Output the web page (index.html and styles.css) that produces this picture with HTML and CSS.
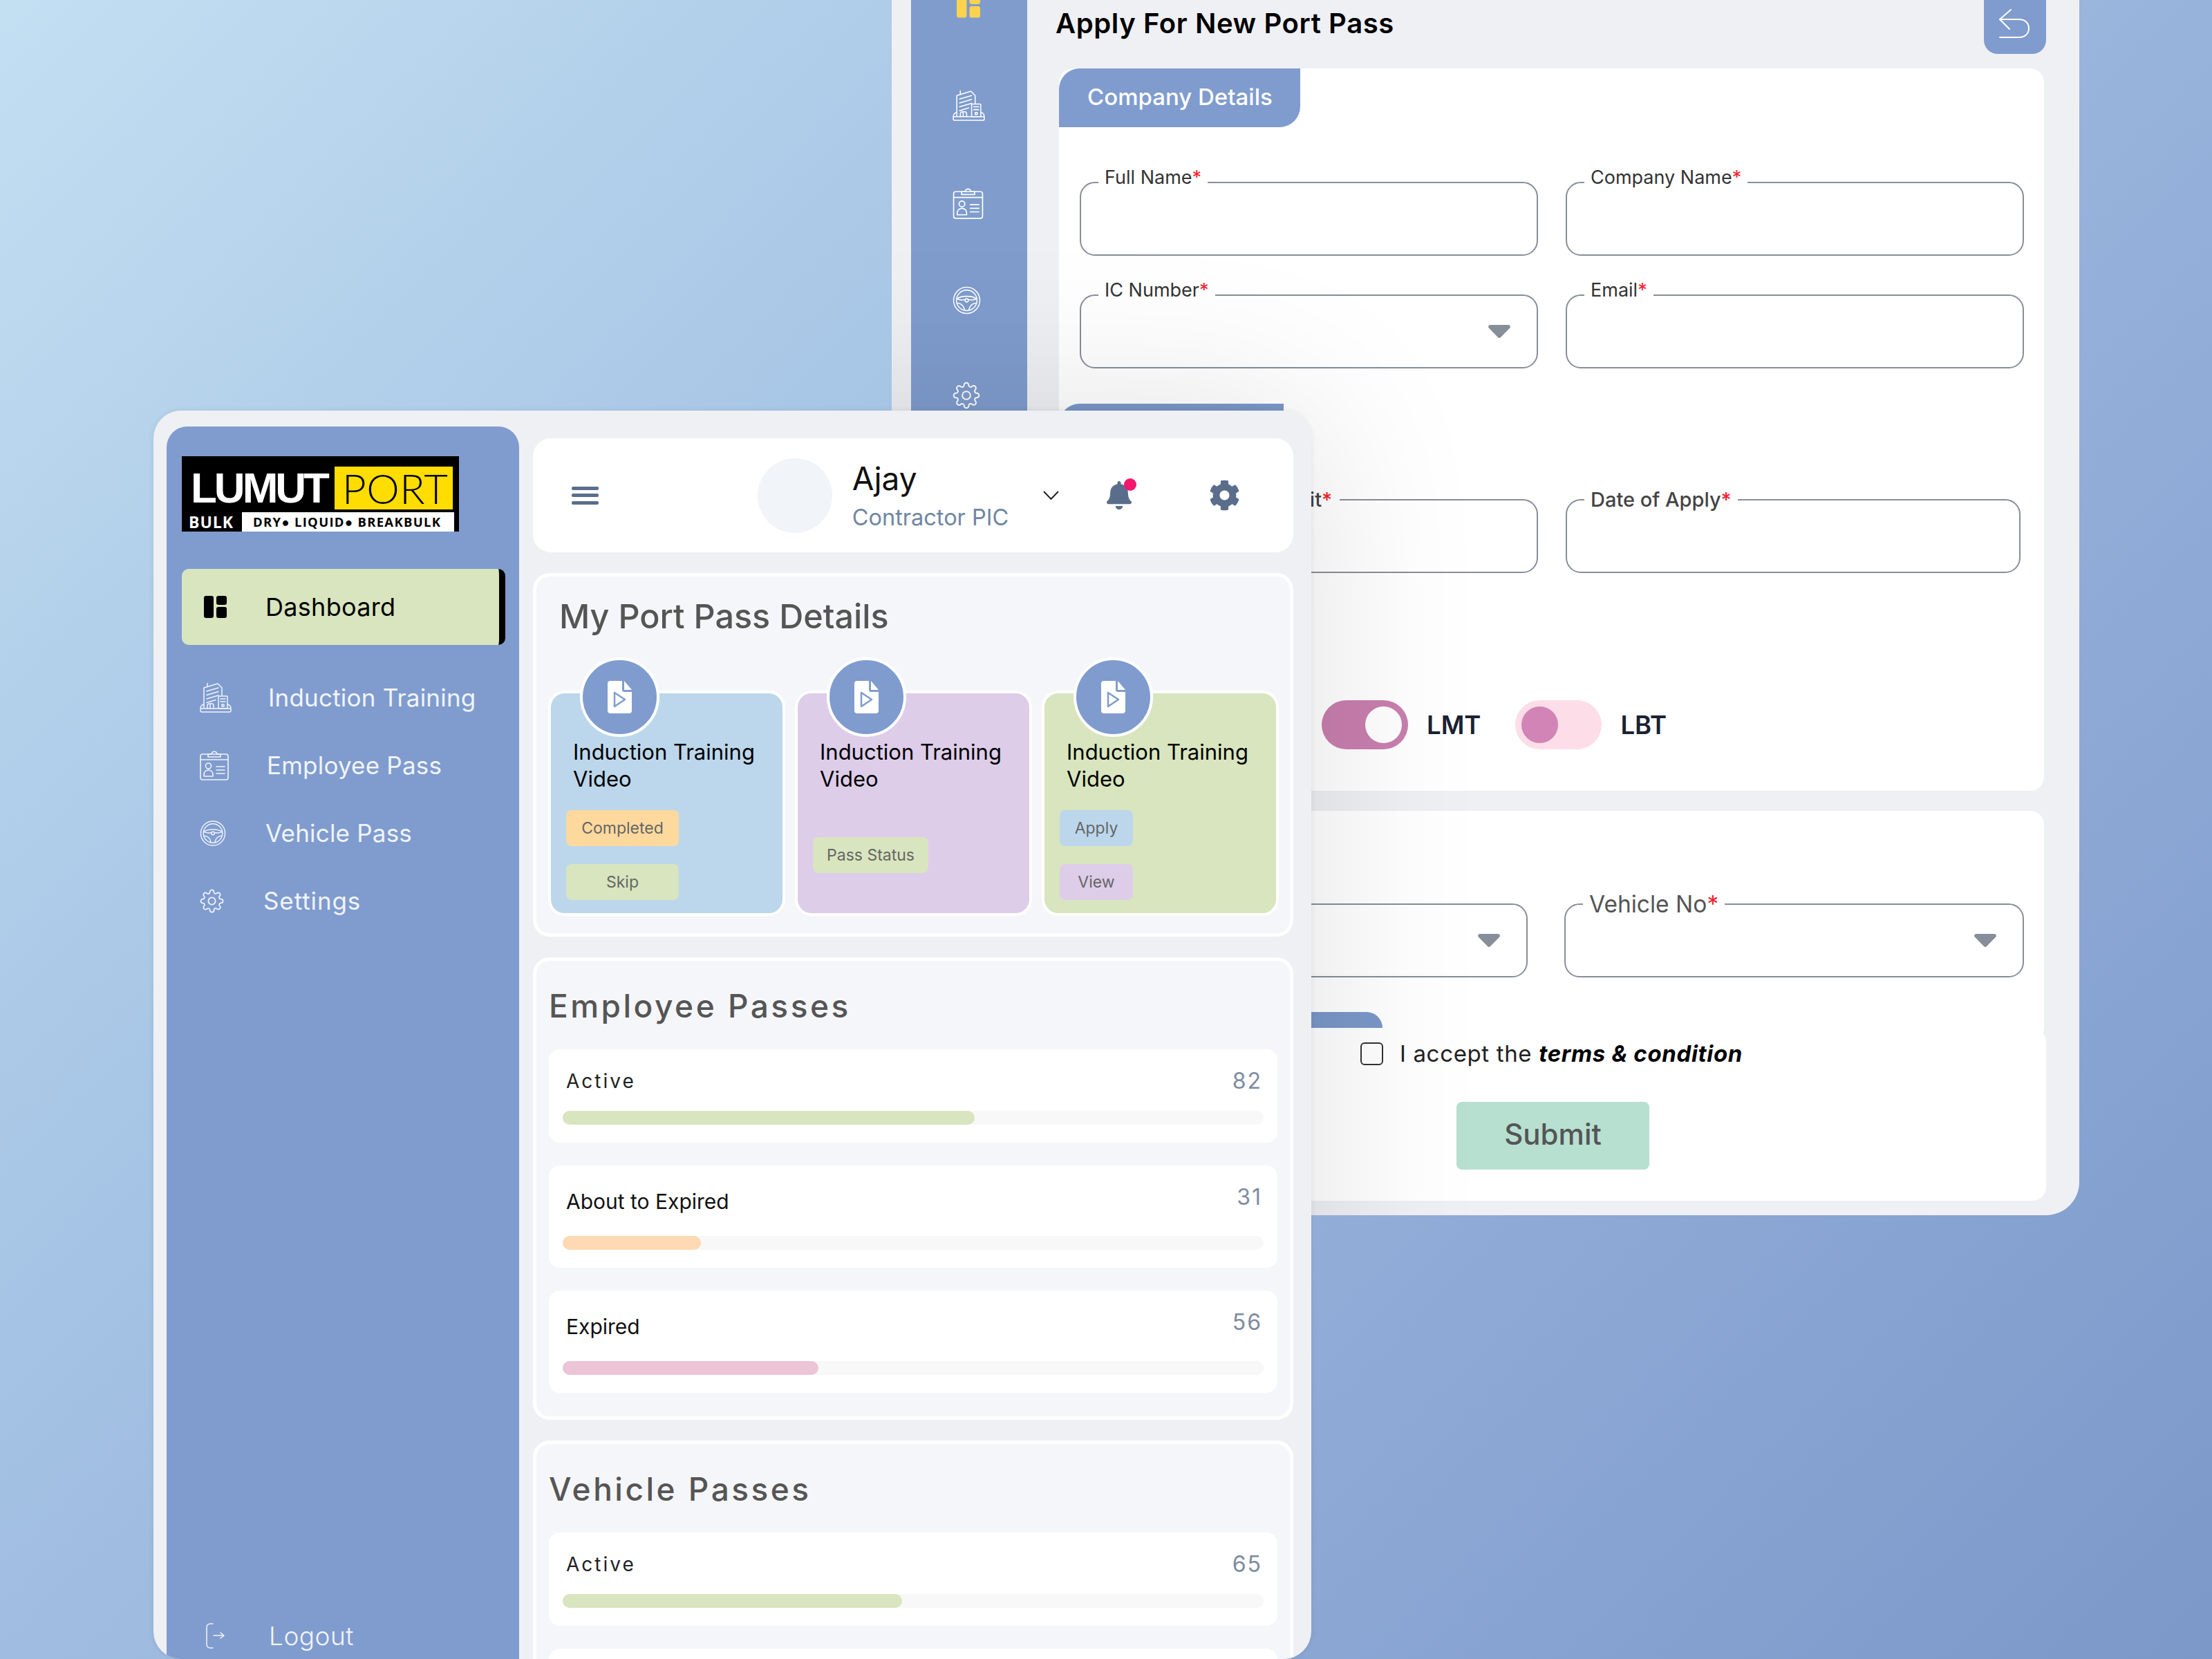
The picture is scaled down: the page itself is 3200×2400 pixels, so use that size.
FILE: index.html
```html
<!DOCTYPE html>
<html lang="en">
<head>
  <meta charset="UTF-8">
  <title>Lumut Port Pass</title>
  <link rel="stylesheet" href="styles.css">
</head>
<body>
  <svg class="sprite" xmlns="http://www.w3.org/2000/svg">
    <symbol id="ic-board" viewBox="0 0 33 32">
      <rect x="0" y="0" width="14" height="32" rx="3"/>
      <rect x="18" y="0" width="15" height="13" rx="3"/>
      <rect x="18" y="16" width="15" height="16" rx="3"/>
    </symbol>
    <symbol id="ic-building" viewBox="0 0 46 44">
      <g fill="none" stroke="currentColor" stroke-width="1.500" stroke-linejoin="round" stroke-linecap="round">
        <path d="M6 37V8L26 2l6 6v11"/>
        <path d="M11 6V1.500"/>
        <path d="M10 13l17-5M10 18.500l17-5M10 24l17-5M10 29.500l13-4"/>
        <rect x="27" y="20" width="13" height="18" rx="1"/>
        <path d="M30 24h7M30 28h7"/>
        <rect x="32" y="32" width="3" height="3"/>
        <rect x="1" y="38" width="44" height="5" rx="2"/>
        <path d="M1 38c0-3 2-6 5-6M40 32c3 0 5 3 5 6"/>
        <path d="M11 38v-4a3 3 0 0 1 3-3h4a3 3 0 0 1 2 3v4M15 31v7"/>
      </g>
    </symbol>
    <symbol id="ic-card" viewBox="0 0 42 43">
      <g fill="none" stroke="currentColor" stroke-width="1.600" stroke-linejoin="round" stroke-linecap="round">
        <rect x="1" y="5" width="40" height="37" rx="3"/>
        <path d="M1 13h40"/>
        <path d="M12 9V5h5c1-5 7-5 8 0h5v4z"/>
        <circle cx="12.500" cy="22" r="4"/>
        <path d="M6 37v-2.500c0-4 3-6.500 6.500-6.500s6.500 2.500 6.500 6.500V37z"/>
        <path d="M24 23h12M24 28h12M24 33h12"/>
      </g>
    </symbol>
    <symbol id="ic-wheel" viewBox="0 0 40 40">
      <g fill="none" stroke="currentColor" stroke-width="1.500" stroke-linejoin="round" stroke-linecap="round">
        <circle cx="20" cy="20" r="18.500"/>
        <circle cx="20" cy="20" r="14.500"/>
        <circle cx="20" cy="20" r="2.300"/>
        <path d="M6.500 18C11 13 29 13 33.500 18"/>
        <path d="M6.500 18c4 1.500 7 2 11 1M33.500 18c-4 1.500-7 2-11 1"/>
        <path d="M7 24c5 0 9 4 10 9.500M33 24c-5 0-9 4-10 9.500"/>
      </g>
    </symbol>
    <symbol id="ic-gear" viewBox="0 0 24 24">
      <g fill="none" stroke="currentColor" stroke-width="1.200" stroke-linejoin="round">
        <circle cx="12" cy="12" r="3.500"/>
        <path d="M19.400 15a1.650 1.650 0 0 0 .33 1.820l.06.06a2 2 0 0 1 0 2.830 2 2 0 0 1-2.830 0l-.06-.06a1.650 1.650 0 0 0-1.820-.33 1.650 1.650 0 0 0-1 1.510V21a2 2 0 0 1-2 2 2 2 0 0 1-2-2v-.09A1.650 1.650 0 0 0 9 19.400a1.650 1.650 0 0 0-1.820.33l-.06.06a2 2 0 0 1-2.830 0 2 2 0 0 1 0-2.830l.06-.06a1.650 1.650 0 0 0 .33-1.820 1.650 1.650 0 0 0-1.510-1H3a2 2 0 0 1-2-2 2 2 0 0 1 2-2h.09A1.650 1.650 0 0 0 4.600 9a1.650 1.650 0 0 0-.33-1.820l-.06-.06a2 2 0 0 1 0-2.830 2 2 0 0 1 2.830 0l.06.06a1.650 1.650 0 0 0 1.820.33H9a1.650 1.650 0 0 0 1-1.510V3a2 2 0 0 1 2-2 2 2 0 0 1 2 2v.09a1.650 1.650 0 0 0 1 1.510 1.650 1.650 0 0 0 1.820-.33l.06-.06a2 2 0 0 1 2.830 0 2 2 0 0 1 0 2.830l-.06.06a1.650 1.650 0 0 0-.33 1.820V9a1.650 1.650 0 0 0 1.510 1H21a2 2 0 0 1 2 2 2 2 0 0 1-2 2h-.09a1.650 1.650 0 0 0-1.510 1z"/>
      </g>
    </symbol>
    <symbol id="ic-caret" viewBox="0 0 32 19">
      <path fill="#868e99" d="M3 0h26c2.500 0 3.800 2.600 2.200 4.500L18 18c-1.200 1.300-2.800 1.300-4 0L.8 4.500C-.8 2.600.5 0 3 0z"/>
    </symbol>
    <symbol id="ic-doc" viewBox="0 0 35 47">
      <path fill="#fff" d="M4 0h17v13a3 3 0 0 0 3 3h11v27a4 4 0 0 1-4 4H4a4 4 0 0 1-4-4V4a4 4 0 0 1 4-4z"/>
      <path fill="#fff" d="M24 0l11 13H24z"/>
      <path fill="none" stroke="#809cce" stroke-width="2.500" stroke-linejoin="round" d="M10 17v20l15-10z"/>
    </symbol>
  </svg>

  <div class="desk">

    <!-- back window: apply form -->
    <section class="win-back">
      <aside class="mini-side">
        <svg class="mini-board"><use href="#ic-board"/></svg>
        <svg class="mini-building"><use href="#ic-building"/></svg>
        <svg class="mini-card"><use href="#ic-card"/></svg>
        <svg class="mini-wheel"><use href="#ic-wheel"/></svg>
        <svg class="mini-gear"><use href="#ic-gear"/></svg>
      </aside>

      <div class="form-main">
        <div class="form-head">
          <h1>Apply For New Port Pass</h1>
          <button class="back-btn" type="button">
            <svg width="50" height="46" viewBox="0 0 50 46" fill="none" stroke="#fff" stroke-width="2" stroke-linecap="round" stroke-linejoin="round">
              <path d="M19 3L3 17l14 14"/>
              <path d="M3 17h28c8 0 14 5 14 13s-6 13-14 13H3"/>
            </svg>
          </button>
        </div>

        <div class="form-card card-company">
          <div class="tab">Company Details</div>
          <div class="field-grid">
            <fieldset class="field"><legend>Full Name<em>*</em></legend></fieldset>
            <fieldset class="field"><legend>Company Name<em>*</em></legend></fieldset>
            <fieldset class="field"><legend>IC Number<em>*</em></legend><svg class="caret"><use href="#ic-caret"/></svg></fieldset>
            <fieldset class="field"><legend>Email<em>*</em></legend></fieldset>
          </div>

          <div class="tab tab-two"></div>
          <div class="field-grid grid-two">
            <fieldset class="field field-strong field-permit"><legend>Name of Entry Permit<em>*</em></legend></fieldset>
            <fieldset class="field field-strong"><legend>Date of Apply<em>*</em></legend></fieldset>
          </div>

          <div class="toggles">
            <div class="toggle-item">
              <span class="toggle toggle-on"><i></i></span>
              <span class="toggle-label">LMT</span>
            </div>
            <div class="toggle-item">
              <span class="toggle toggle-off"><i></i></span>
              <span class="toggle-label">LBT</span>
            </div>
          </div>
        </div>

        <div class="form-card card-vehicle">
          <div class="field-grid grid-three">
            <fieldset class="field field-big"><legend>Vehicle Type<em>*</em></legend><svg class="caret"><use href="#ic-caret"/></svg></fieldset>
            <fieldset class="field field-big"><legend>Vehicle No<em>*</em></legend><svg class="caret"><use href="#ic-caret"/></svg></fieldset>
          </div>
          <div class="tab tab-three"></div>
        </div>

        <div class="form-card card-submit">
          <label class="accept">
            <input type="checkbox">
            <span>I accept the <b><i>terms &amp; condition</i></b></span>
          </label>
          <button class="submit-btn" type="button">Submit</button>
        </div>
      </div>
    </section>

    <!-- front window: dashboard -->
    <section class="win-front">
      <aside class="sidebar">
        <div class="logo">
          <div class="logo-top">
            <span class="logo-lumut">LUMUT</span>
            <span class="logo-port">PORT</span>
          </div>
          <div class="logo-bottom">
            <span class="logo-bulk">BULK</span>
            <span class="logo-tag">DRY● LIQUID● BREAKBULK</span>
          </div>
        </div>

        <a class="nav-active">
          <svg class="ic-dash"><use href="#ic-board"/></svg>
          <span>Dashboard</span>
        </a>
        <nav class="nav">
          <a class="nav-item gap-building"><svg class="ic-building"><use href="#ic-building"/></svg><span>Induction Training</span></a>
          <a class="nav-item gap-card"><svg class="ic-card"><use href="#ic-card"/></svg><span>Employee Pass</span></a>
          <a class="nav-item gap-wheel"><svg class="ic-wheel"><use href="#ic-wheel"/></svg><span>Vehicle Pass</span></a>
          <a class="nav-item gap-gear"><svg class="ic-gear"><use href="#ic-gear"/></svg><span>Settings</span></a>
        </nav>
        <a class="logout">
          <svg width="29" height="37" viewBox="0 0 29 37" fill="none" stroke="currentColor" stroke-width="1.500" stroke-linecap="round" stroke-linejoin="round">
            <path d="M11 1H7a5 5 0 0 0-5 5v25a5 5 0 0 0 5 5h4"/>
            <path d="M12 18h14M22 14l5 4-5 4"/>
          </svg>
          <span>Logout</span>
        </a>
      </aside>

      <main class="content">
        <header class="topbar">
          <div class="burger"><span></span><span></span><span></span></div>
          <div class="avatar"></div>
          <div class="user">
            <div class="user-name">Ajay</div>
            <div class="user-role">Contractor PIC</div>
          </div>
          <svg class="chevron" width="23" height="13" viewBox="0 0 23 13" fill="none" stroke="#222" stroke-width="2"><path d="M1 1l10.500 11L22 1"/></svg>
          <div class="bell">
            <svg width="36" height="43" viewBox="0 0 448 512" fill="#5a6e8c"><path d="M224 512c35.320 0 63.970-28.650 63.970-64H160.030c0 35.350 28.650 64 63.970 64zm215.390-149.710c-19.320-20.760-55.470-51.990-55.470-154.290 0-77.700-54.480-139.900-127.940-155.160V32c0-17.670-14.320-32-31.980-32s-31.980 14.330-31.980 32v20.840C118.560 68.100 64.080 130.300 64.080 208c0 102.300-36.150 133.530-55.470 154.290-6 6.450-8.660 14.160-8.610 21.710.11 16.400 12.980 32 32.100 32h383.800c19.120 0 32-15.600 32.100-32 .05-7.550-2.610-15.260-8.610-21.710z"/></svg>
            <span class="bell-dot"></span>
          </div>
          <svg class="cog" width="45" height="45" viewBox="0 0 512 512" fill="#5a6e8c"><path d="M487.400 315.700l-42.600-24.600c4.300-23.200 4.300-47 0-70.200l42.600-24.600c4.900-2.800 7.100-8.600 5.500-14-11.100-35.600-30-67.800-54.700-94.600-3.800-4.100-10-5.100-14.800-2.300L380.800 110c-17.900-15.400-38.500-27.300-60.800-35.100V25.800c0-5.600-3.900-10.500-9.400-11.700-36.700-8.200-74.300-7.800-109.200 0-5.500 1.200-9.400 6.100-9.400 11.700V75c-22.200 7.900-42.800 19.800-60.800 35.100L88.700 85.500c-4.900-2.800-11-1.900-14.800 2.300-24.700 26.700-43.600 58.900-54.700 94.600-1.700 5.400.6 11.200 5.500 14L67.300 221c-4.300 23.200-4.300 47 0 70.200l-42.600 24.600c-4.900 2.800-7.100 8.600-5.500 14 11.100 35.600 30 67.800 54.700 94.600 3.800 4.100 10 5.100 14.800 2.300l42.600-24.600c17.900 15.400 38.500 27.300 60.800 35.100v49.200c0 5.600 3.900 10.500 9.400 11.700 36.700 8.200 74.300 7.800 109.200 0 5.500-1.200 9.400-6.100 9.400-11.700v-49.200c22.200-7.900 42.800-19.800 60.800-35.100l42.600 24.600c4.900 2.800 11 1.900 14.800-2.300 24.700-26.700 43.600-58.900 54.700-94.600 1.500-5.500-.7-11.300-5.600-14.100zM256 336c-44.100 0-80-35.900-80-80s35.900-80 80-80 80 35.900 80 80-35.900 80-80 80z"/></svg>
        </header>

        <section class="panel panel-pass">
          <h2 class="pass-title">My Port Pass Details</h2>
          <div class="pass-grid">
            <div class="pass-card bg-blue">
              <div class="pass-circle"><svg><use href="#ic-doc"/></svg></div>
              <p class="pass-name">Induction Training Video</p>
              <div class="pass-actions">
                <span class="chip chip-wide bg-orange">Completed</span>
                <span class="chip chip-wide bg-green">Skip</span>
              </div>
            </div>
            <div class="pass-card bg-purple">
              <div class="pass-circle"><svg><use href="#ic-doc"/></svg></div>
              <p class="pass-name">Induction Training Video</p>
              <div class="pass-actions pass-actions-low">
                <span class="chip chip-status bg-green">Pass Status</span>
              </div>
            </div>
            <div class="pass-card bg-green">
              <div class="pass-circle"><svg><use href="#ic-doc"/></svg></div>
              <p class="pass-name">Induction Training Video</p>
              <div class="pass-actions">
                <span class="chip chip-small bg-blue">Apply</span>
                <span class="chip chip-small bg-purple">View</span>
              </div>
            </div>
          </div>
        </section>

        <section class="panel panel-stats">
          <h2 class="stats-title">Employee Passes</h2>
          <div class="stat">
            <div class="stat-head">
              <span class="stat-label spaced">Active</span>
              <span class="stat-value">82</span>
            </div>
            <div class="bar"><div class="bar-fill fill-green" style="width: 596px"></div></div>
          </div>
          <div class="stat stat-tall">
            <div class="stat-head">
              <span class="stat-label">About to Expired</span>
              <span class="stat-value">31</span>
            </div>
            <div class="bar"><div class="bar-fill fill-orange" style="width: 200px"></div></div>
          </div>
          <div class="stat stat-tall">
            <div class="stat-head">
              <span class="stat-label">Expired</span>
              <span class="stat-value">56</span>
            </div>
            <div class="bar"><div class="bar-fill fill-pink" style="width: 370px"></div></div>
          </div>
        </section>

        <section class="panel panel-stats">
          <h2 class="stats-title">Vehicle Passes</h2>
          <div class="stat">
            <div class="stat-head">
              <span class="stat-label spaced">Active</span>
              <span class="stat-value">65</span>
            </div>
            <div class="bar"><div class="bar-fill fill-green" style="width: 491px"></div></div>
          </div>
          <div class="stat stat-tall"></div>
        </section>
      </main>
    </section>
  </div>
</body>
</html>
```

FILE: styles.css
```css
* {
  box-sizing: border-box;
}
body {
  margin: 0;
  font-family: Inter, "Liberation Sans", sans-serif;
  color: #000;
}
.sprite {
  display: none;
}
.desk {
  position: relative;
  width: 3200px;
  height: 2400px;
  overflow: hidden;
  background: linear-gradient(135deg, #c3dff2 0%, #a5c3e4 35%, #8faad6 70%, #7b98c9 100%);
}

/* back window */
.win-back {
  position: absolute;
  left: 1290px;
  top: -40px;
  width: 1718px;
  height: 1798px;
  display: flex;
  padding-left: 28px;
  overflow: hidden;
  background: #eff0f4;
  border-radius: 0 0 48px 0;
}
/* soft shade the front window throws on this window only */
.win-back::after {
  content: "";
  position: absolute;
  left: -1068px;
  top: 634px;
  width: 1675px;
  height: 1806px;
  border-radius: 40px;
  box-shadow: 0 0 300px rgba(0, 0, 0, 0.12);
}
.mini-side {
  width: 168px;
  padding: 32px 0 0 60px;
  background: #7f9ccd;
  color: #fff;
  display: flex;
  flex-direction: column;
  gap: 97px;
}
.mini-side svg {
  display: block;
  flex: none;
}
.mini-board {
  width: 34px;
  height: 34px;
  margin: 0 0 7px 6px;
  fill: #fdd24f;
}
.mini-building {
  width: 47px;
  height: 45px;
}
.mini-card {
  width: 45px;
  height: 45px;
}
.mini-wheel {
  width: 41px;
  height: 41px;
}
.mini-gear {
  width: 40px;
  height: 40px;
}
.form-main {
  width: 1428px;
  margin-left: 46px;
  padding-top: 20px;
}
.form-head {
  display: flex;
  justify-content: space-between;
  align-items: flex-start;
  margin-bottom: 21px;
}
.form-head h1 {
  margin: 30px 0 0 -5px;
  font-size: 40px;
  line-height: 48px;
  font-weight: 600;
  letter-spacing: 0.600px;
}
.back-btn {
  width: 90px;
  height: 98px;
  padding: 10px 0 0;
  border: none;
  border-radius: 20px;
  background: #809cce;
  display: flex;
  align-items: center;
  justify-content: center;
}
.form-card {
  width: 1425px;
  background: #fff;
  border-radius: 20px;
}
.card-company {
  padding-bottom: 60px;
}
.tab {
  width: 349px;
  height: 85px;
  padding: 21px 0 0 41px;
  background: #809cce;
  color: #fff;
  font-size: 33px;
  line-height: 40px;
  font-weight: 500;
  border-radius: 30px 0 30px 0;
}
.tab-two {
  width: 325px;
  margin-top: 51px;
  background: #7b98c9;
}
.tab-three {
  width: 468px;
  height: 23px;
  margin-top: 50px;
  padding: 0;
  background: #7b98c9;
  border-radius: 0 30px 0 0;
}
.field-grid {
  display: grid;
  grid-template-columns: 663px 663px;
  column-gap: 40px;
  row-gap: 35px;
  margin: 58px 0 0 30px;
}
.grid-two {
  grid-template-columns: 663px 658px;
  margin-top: 39px;
}
.grid-three {
  grid-template-columns: 648px 665px;
  column-gap: 53px;
  margin-top: 0;
  padding-top: 117px;
}
.field {
  display: flex;
  align-items: center;
  justify-content: flex-end;
  height: 128px;
  min-width: 0;
  margin: 0;
  padding: 0 38px 0 0;
  border: 2px solid #868e99;
  border-radius: 22px;
}
.field legend {
  margin-left: 25px;
  padding: 0 9px 14px;
  font-size: 27px;
  line-height: 30px;
  color: #333;
}
.field legend em {
  font-style: normal;
  color: #f5222d;
}
.field-strong {
  height: 121px;
}
.field-strong legend {
  padding-bottom: 0;
  font-size: 29px;
  font-weight: 500;
  color: #444;
}
.field-permit legend {
  margin-left: 43px;
  padding-right: 11px;
}
.field-big {
  height: 124px;
}
.field-big legend {
  padding-bottom: 0;
  font-size: 33.500px;
  line-height: 36px;
  color: #555;
}
.caret {
  width: 32px;
  height: 19px;
  margin-bottom: 21px;
}
.field-big .caret {
  margin-bottom: 18px;
}
.toggles {
  display: flex;
  gap: 50px;
  margin: 184px 0 0 380px;
}
.toggle-item {
  display: flex;
  align-items: center;
  gap: 27px;
}
.toggle {
  display: flex;
  align-items: center;
  width: 125px;
  height: 71px;
  padding: 0 9px;
  border-radius: 36px;
}
.toggle i {
  display: block;
  width: 53px;
  height: 53px;
  border-radius: 50%;
}
.toggle-on {
  justify-content: flex-end;
  background: #c97fae;
}
.toggle-on i {
  background: #fff;
}
.toggle-off {
  background: #fcdde8;
}
.toggle-off i {
  background: #d284b6;
}
.toggle-label {
  font-size: 36.500px;
  font-weight: 600;
  color: #1a2233;
}
.card-vehicle {
  margin-top: 29px;
  padding-bottom: 20px;
}
.card-submit {
  position: relative;
  width: 1428px;
  margin-top: -20px;
  height: 250px;
  padding-top: 21px;
}
.accept {
  display: flex;
  align-items: center;
  gap: 24px;
  margin-left: 436px;
  font-size: 33px;
  line-height: 33px;
  letter-spacing: 0.650px;
  color: #222;
}
.accept b {
  color: #000;
}
.accept input {
  appearance: none;
  width: 33px;
  height: 33px;
  margin: 0;
  background: #fff;
  border: 2px solid #333;
  border-radius: 6px;
}
.submit-btn {
  display: block;
  width: 279px;
  height: 98px;
  margin: 53px 0 0 575px;
  padding: 0 0 6px;
  border: none;
  border-radius: 8px;
  background: #b7e0d1;
  color: #555;
  font-family: inherit;
  font-size: 42px;
  font-weight: 500;
}

/* front window */
.win-front {
  position: absolute;
  left: 222px;
  top: 594px;
  width: 1675px;
  height: 1806px;
  display: flex;
  gap: 20px;
  padding: 23px 26px 0 19px;
  overflow: hidden;
  background: #eff0f4;
  border-radius: 40px;
  box-shadow: 0 0 8px rgba(0, 0, 0, 0.08);
}
.sidebar {
  width: 510px;
  flex: none;
  display: flex;
  flex-direction: column;
  padding: 43px 20px 4px 22px;
  background: #809cce;
  border-radius: 30px 30px 0 0;
  color: #f0f4fb;
}
.logo {
  width: 401px;
  height: 109px;
  background: #000;
  padding-top: 15px;
  font-family: "Open Sans", sans-serif;
}
.logo-top {
  display: flex;
  align-items: center;
  height: 62px;
  padding-left: 13px;
}
.logo-lumut {
  width: 208px;
  font-family: "Liberation Sans", sans-serif;
  font-size: 62px;
  line-height: 62px;
  font-weight: 700;
  letter-spacing: -4px;
  color: #fff;
}
.logo-port {
  width: 171px;
  height: 62px;
  padding-left: 11px;
  background: #ffdd00;
  font-family: Lato, sans-serif;
  font-size: 60px;
  line-height: 62px;
  font-weight: 300;
  letter-spacing: 0.500px;
  color: #000;
}
.logo-bottom {
  display: flex;
  align-items: flex-end;
  height: 32px;
}
.logo-bulk {
  width: 87px;
  padding-left: 10px;
  font-size: 23px;
  line-height: 28px;
  font-weight: 700;
  letter-spacing: 1px;
  color: #fff;
}
.logo-tag {
  width: 307px;
  height: 28px;
  padding-left: 16px;
  background: #fff;
  font-size: 18.500px;
  line-height: 28px;
  font-weight: 700;
  letter-spacing: 1.300px;
  color: #000;
  white-space: nowrap;
}
.nav-active {
  display: flex;
  align-items: center;
  gap: 56px;
  width: 468px;
  height: 110px;
  margin-top: 54px;
  padding-left: 32px;
  background: #d8e5be;
  border-right: 9px solid #000;
  border-radius: 10px;
  color: #000;
  font-size: 36px;
  letter-spacing: 0.300px;
}
.ic-dash {
  width: 33px;
  height: 32px;
}
.nav {
  margin-top: 27px;
}
.nav-item {
  display: flex;
  align-items: center;
  height: 98px;
  padding-left: 26px;
  font-size: 35px;
  letter-spacing: 0.200px;
}
.gap-building {
  gap: 53px;
}
.gap-card {
  gap: 55px;
}
.gap-wheel {
  gap: 57px;
}
.gap-gear {
  gap: 57px;
  letter-spacing: 0.900px;
}
.ic-building {
  width: 46px;
  height: 44px;
}
.ic-card {
  width: 42px;
  height: 43px;
}
.ic-wheel {
  width: 38px;
  height: 39px;
}
.ic-gear {
  width: 35px;
  height: 37px;
}
.logout {
  display: flex;
  align-items: center;
  gap: 63px;
  height: 60px;
  margin-top: auto;
  padding-left: 34px;
  font-size: 37px;
  font-weight: 300;
  letter-spacing: 0.500px;
}
.content {
  width: 1100px;
  flex: none;
  display: flex;
  flex-direction: column;
  gap: 30px;
  padding-top: 17px;
}
.topbar {
  display: flex;
  align-items: center;
  flex: none;
  height: 165px;
  padding: 0 77px 0 56px;
  background: #fff;
  border-radius: 26px;
}
.burger {
  display: flex;
  flex-direction: column;
  gap: 5.500px;
  width: 39px;
}
.burger span {
  display: block;
  height: 5px;
  background: #5a6e8c;
  border-radius: 2px;
}
.avatar {
  width: 108px;
  height: 108px;
  margin-left: 230px;
  border-radius: 50%;
  background: #f1f4f9;
}
.user {
  width: 277px;
  margin-left: 29px;
}
.user-name {
  font-size: 46px;
  line-height: 54px;
  color: #111;
}
.user-role {
  margin-top: 11px;
  font-size: 32.500px;
  line-height: 38px;
  color: #6f86a3;
}
.bell {
  position: relative;
  width: 36px;
  height: 43px;
  margin-left: 69px;
}
.bell svg {
  display: block;
}
.bell-dot {
  position: absolute;
  top: -3px;
  right: -7px;
  width: 18px;
  height: 18px;
  border-radius: 50%;
  background: #f5166e;
}
.cog {
  margin-left: 112px;
}
.panel {
  flex: none;
  background: #f5f6f9;
  border: 5px solid #fff;
  border-radius: 24px;
}
.panel-pass {
  padding: 30px 16px 25px 17px;
}
.pass-title {
  margin: 0 0 79px 16px;
  font-size: 48.500px;
  line-height: 56px;
  font-weight: 500;
  color: #555;
}
.pass-grid {
  display: grid;
  grid-template-columns: repeat(3, 1fr);
  gap: 14px;
}
.pass-card {
  position: relative;
  height: 326px;
  padding: 65px 20px 0 22px;
  border: 4px solid #fff;
  border-radius: 24px;
}
.pass-circle {
  position: absolute;
  left: 42px;
  top: -52px;
  width: 115px;
  height: 115px;
  display: flex;
  align-items: center;
  justify-content: center;
  background: #809cce;
  border: 4px solid #fff;
  border-radius: 50%;
}
.pass-circle svg {
  width: 35px;
  height: 47px;
}
.pass-name {
  margin: 0 0 0 10px;
  font-size: 31px;
  line-height: 39px;
  color: #000;
}
.pass-actions {
  display: flex;
  flex-direction: column;
  gap: 26px;
  margin-top: 26px;
}
.pass-actions-low {
  margin-top: 65px;
}
.chip {
  display: flex;
  align-items: center;
  justify-content: center;
  height: 52px;
  border-radius: 8px;
  font-size: 23px;
  color: #666;
}
.chip-wide {
  width: 163px;
}
.chip-status {
  width: 167px;
}
.chip-small {
  width: 106px;
}
.bg-blue {
  background: #bcd7ec;
}
.bg-purple {
  background: #ddcde9;
}
.bg-green {
  background: #d8e5be;
}
.bg-orange {
  background: #fed99e;
}
.panel-stats {
  padding: 37px 18px 34px;
}
.stats-title {
  margin: 0 0 35px 0;
  font-size: 46px;
  line-height: 56px;
  font-weight: 500;
  letter-spacing: 3.500px;
  color: #555;
}
.stat {
  height: 135px;
  margin-bottom: 33px;
  padding: 0 20px;
  background: #fff;
  border-radius: 16px;
}
.stat-tall {
  height: 148px;
}
.stat:last-child {
  margin-bottom: 0;
}
.stat-head {
  display: flex;
  justify-content: space-between;
  align-items: flex-start;
  height: 89px;
  padding: 28px 2px 0 5px;
}
.stat-tall .stat-head {
  height: 102px;
}
.stat-label {
  font-size: 30px;
  line-height: 36px;
  color: #111;
}
.stat-tall .stat-label {
  margin-top: 6px;
}
.spaced {
  font-size: 28px;
  letter-spacing: 3px;
  color: #222;
}
.stat-value {
  font-size: 32px;
  line-height: 36px;
  letter-spacing: 2px;
  color: #7d8ba0;
}
.bar {
  height: 20px;
  background: #f8f8f8;
  border-radius: 10px;
}
.bar-fill {
  height: 20px;
  border-radius: 10px;
}
.fill-green {
  background: #d8e5be;
}
.fill-orange {
  background: #fed9b3;
}
.fill-pink {
  background: #ebc4d6;
}
```
